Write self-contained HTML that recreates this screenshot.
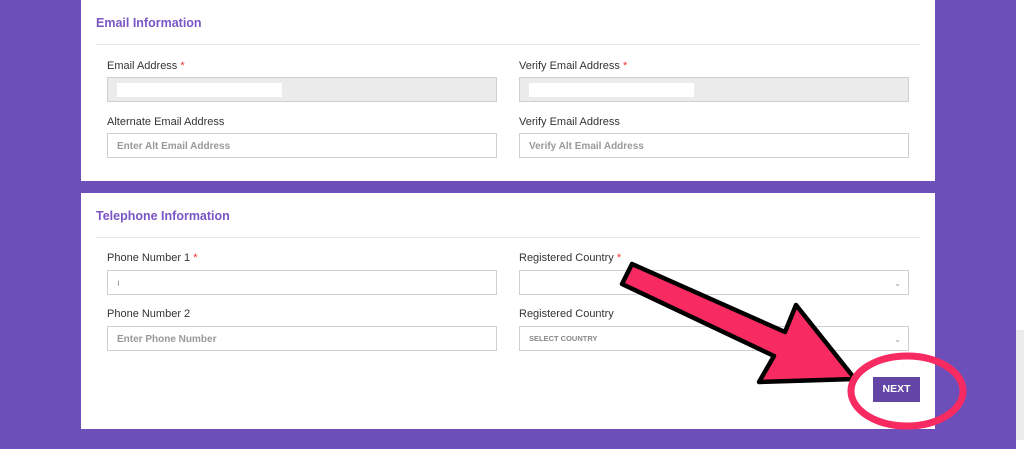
<!DOCTYPE html>
<html><head><style>
*{margin:0;padding:0;box-sizing:border-box}
body{width:1024px;height:460px;background:#fff;position:relative;overflow:hidden;font-family:"Liberation Sans",Arial,sans-serif}
.bg{position:absolute;left:0;top:0;width:1016px;height:449px;background:#6c4fb8}
.rs{position:absolute;left:1016px;top:330px;width:8px;height:110px;background:#ececec}
.card{position:absolute;left:81px;width:854px;background:#fff}
.h{position:absolute;left:15px;font-size:12.5px;font-weight:bold;color:#7b55c4}
.hr{position:absolute;left:15px;width:824px;height:1px;background:#e6e6e6}
.lbl{position:absolute;font-size:11px;color:#333}
.lbl i{color:#e33;font-style:normal}
.in{position:absolute;width:390px;height:25px;border:1px solid #cfcfcf;background:#fff;font-size:10px;color:#999;font-weight:bold;padding:7px 9px}
.gray{background:#ebebeb}
.wb{position:absolute;left:9px;top:5px;width:165px;height:14px;background:#fff}
.sel{font-size:7.5px;color:#888}
.car{position:absolute;right:7px;top:8px;font-size:8px;color:#999;font-weight:normal}
.btn{position:absolute;left:792px;top:184px;width:47px;height:25px;background:#6345a6;color:#fff;font-size:10.5px;font-weight:bold;text-align:center;line-height:25px}
</style></head><body>
<div class="bg"></div><div class="rs"></div>
<div class="card" style="top:0;height:181px">
 <div class="h" style="top:16px">Email Information</div>
 <div class="hr" style="top:44px"></div>
 <div class="lbl" style="left:26px;top:60px">Email Address <i>*</i></div>
 <div class="lbl" style="left:438px;top:60px">Verify Email Address <i>*</i></div>
 <div class="in gray" style="left:26px;top:77px"><div class="wb"></div></div>
 <div class="in gray" style="left:438px;top:77px"><div class="wb"></div></div>
 <div class="lbl" style="left:26px;top:116px">Alternate Email Address</div>
 <div class="lbl" style="left:438px;top:116px">Verify Email Address</div>
 <div class="in" style="left:26px;top:133px">Enter Alt Email Address</div>
 <div class="in" style="left:438px;top:133px">Verify Alt Email Address</div>
</div>
<div class="card" style="top:193px;height:236px">
 <div class="h" style="top:16px">Telephone Information</div>
 <div class="hr" style="top:44px"></div>
 <div class="lbl" style="left:26px;top:59px">Phone Number 1 <i>*</i></div>
 <div class="lbl" style="left:438px;top:59px">Registered Country <i>*</i></div>
 <div class="in" style="left:26px;top:77px;font-weight:normal">ı</div>
 <div class="in" style="left:438px;top:77px"><span class="car">⌄</span></div>
 <div class="lbl" style="left:26px;top:115px">Phone Number 2</div>
 <div class="lbl" style="left:438px;top:115px">Registered Country</div>
 <div class="in" style="left:26px;top:133px">Enter Phone Number</div>
 <div class="in sel" style="left:438px;top:133px">SELECT COUNTRY<span class="car">⌄</span></div>
 <div class="btn">NEXT</div>
</div>
<svg style="position:absolute;left:0;top:0" width="1024" height="460">
 <polygon points="632,264 785,332 796,305 855,379 759,382 774,356 622,284" fill="#f72b62" stroke="#000" stroke-width="4.5" stroke-linejoin="round"/>
 <ellipse cx="907" cy="391" rx="56" ry="35" fill="none" stroke="#f72b62" stroke-width="7"/>
</svg>
</body></html>
